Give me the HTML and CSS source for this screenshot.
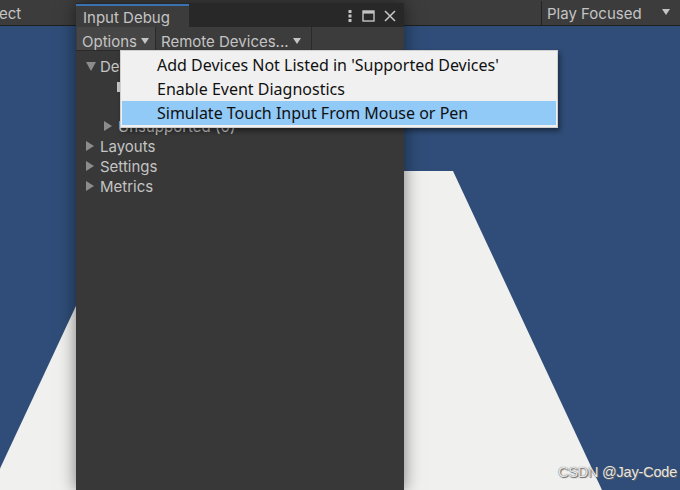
FILE: index.html
```html
<!DOCTYPE html>
<html lang="en">

<head>
    <meta charset="UTF-8">
    <title>Input Debug</title>
    <link rel="stylesheet" href="styles.css">
</head>

<body>
    <div class="topbar">
        <span class="topbar-left">ect</span>
        <span class="topbar-fill"></span>
        <div class="play-focused">
            <span>Play Focused</span>
            <span class="caret"></span>
        </div>
    </div>

    <div class="scene">
        <div class="mesh"></div>
        <div class="watermark">CSDN @Jay-Code</div>
    </div>

    <div class="window">
        <div class="titlebar">
            <div class="tab">Input Debug</div>
            <div class="title-icons">
                <svg width="6" height="14" viewBox="0 0 6 14">
                    <rect x="1.5" y="1" width="3" height="3" fill="#c4c4c4" />
                    <rect x="1.5" y="5.5" width="3" height="3" fill="#c4c4c4" />
                    <rect x="1.5" y="10" width="3" height="3" fill="#c4c4c4" />
                </svg>
                <svg width="13" height="12" viewBox="0 0 13 12">
                    <rect x="1" y="1" width="11" height="10" fill="none" stroke="#c4c4c4" stroke-width="1.4" />
                    <rect x="1" y="1" width="11" height="2.6" fill="#c4c4c4" />
                </svg>
                <svg width="12" height="12" viewBox="0 0 12 12">
                    <path d="M1 1 L11 11 M11 1 L1 11" stroke="#c4c4c4" stroke-width="1.6" />
                </svg>
            </div>
        </div>
        <div class="toolbar">
            <div class="tool-btn options">Options <span class="caret"></span></div>
            <div class="tool-btn remote">Remote Devices... <span class="caret"></span></div>
        </div>
        <div class="tree">
            <div class="row lvl0"><span class="arrow down"></span>Devices</div>
            <div class="row lvl2"><span class="stub"></span></div>
            <div class="row lvl2"></div>
            <div class="row lvl1"><span class="arrow"></span>Unsupported (0)</div>
            <div class="row lvl0"><span class="arrow"></span>Layouts</div>
            <div class="row lvl0"><span class="arrow"></span>Settings</div>
            <div class="row lvl0"><span class="arrow"></span>Metrics</div>
        </div>

        <div class="menu">
            <div class="menu-item">Add Devices Not Listed in 'Supported Devices'</div>
            <div class="menu-item">Enable Event Diagnostics</div>
            <div class="menu-item active">Simulate Touch Input From Mouse or Pen</div>
        </div>
    </div>
</body>

</html>
```

FILE: styles.css
```css
body {
    margin: 0;
    width: 680px;
    height: 490px;
    overflow: hidden;
    position: relative;
    display: flex;
    flex-direction: column;
    font-family: Inter, "Noto Sans", sans-serif;
    background-color: #2f4d78;
}

.topbar {
    height: 24px;
    padding-top: 1px;
    flex: none;
    display: flex;
    align-items: center;
    background-color: #3c3c3c;
    border-bottom: 1px solid #1e1e1e;
    color: #c4c4c4;
    font-size: 15px;
}

.topbar-left {
    margin-left: -1px;
}

.topbar-fill {
    flex: 1;
}

.play-focused {
    width: 123px;
    height: 24px;
    display: flex;
    align-items: center;
    justify-content: space-between;
    padding: 0 10px 0 5px;
    border-left: 1px solid #232323;
}

.caret {
    display: inline-block;
    width: 0;
    height: 0;
    border-left: 4.5px solid transparent;
    border-right: 4.5px solid transparent;
    border-top: 6px solid #c4c4c4;
    vertical-align: middle;
    margin-top: -2px;
}

.scene {
    flex: 1;
    position: relative;
}

.mesh {
    position: absolute;
    inset: 0;
    background-color: #f0f0ef;
    clip-path: polygon(139px 145px, 453px 145px, 602px 464px, -10px 464px);
}

.watermark {
    position: absolute;
    right: 3px;
    bottom: 10px;
    font-family: "Liberation Sans", Arial, sans-serif;
    font-size: 14.5px;
    color: #e6e6e6;
    text-shadow: 0 0 1px #555, 1px 1px 1px #666;
    letter-spacing: -0.2px;
}

.window {
    position: absolute;
    left: 76px;
    top: 3px;
    width: 328px;
    height: 487px;
    background-color: #383838;
    box-shadow: 0 0 16px rgba(0, 0, 0, 0.5);
    display: flex;
    flex-direction: column;
    color: #c4c4c4;
    font-size: 15px;
}

.titlebar {
    height: 24px;
    flex: none;
    display: flex;
    background-color: #282828;
}

.tab {
    width: 113px;
    box-sizing: border-box;
    padding: 3px 0 0 7px;
    background-color: #3c3c3c;
    border-top: 2px solid #3a72b0;
    margin-top: 1px;
    line-height: 18px;
}

.title-icons {
    flex: 1;
    display: flex;
    align-items: center;
    justify-content: flex-end;
    gap: 9px;
    padding: 1px 8px 0 0;
}

.toolbar {
    height: 23px;
    flex: none;
    display: flex;
    background-color: #3c3c3c;
    border-bottom: 1px solid #2a2a2a;
}

.tool-btn {
    display: flex;
    align-items: center;
    gap: 4px;
    padding: 6px 6px 0 5px;
    line-height: 18px;
    border-right: 1px solid #2a2a2a;
}

.options {
    width: 67px;
    background-color: #464646;
    margin-left: 1px;
}

.remote {
    width: 144px;
}

.tree {
    padding-top: 5px;
}

.row {
    height: 20px;
    display: flex;
    align-items: center;
    white-space: nowrap;
}

.lvl0 {
    padding-left: 10px;
}

.lvl1 {
    padding-left: 28px;
}

.lvl2 {
    padding-left: 41px;
}

.stub {
    width: 4px;
    height: 10px;
    margin-top: 2px;
    background-color: #c8c8c8;
}

.arrow {
    width: 0;
    height: 0;
    border-top: 5px solid transparent;
    border-bottom: 5px solid transparent;
    border-left: 8px solid #8c8c8c;
    margin-right: 6px;
}

.arrow.down {
    border-left: 5.5px solid transparent;
    border-right: 5.5px solid transparent;
    border-top: 9px solid #8c8c8c;
    border-bottom: none;
    margin-right: 4px;
}

.menu {
    position: absolute;
    left: 44px;
    top: 47px;
    width: 434px;
    padding: 2px 1px;
    background-color: #f0f0f0;
    border: 1px solid #cfcfcf;
    box-shadow: 2px 3px 5px rgba(0, 0, 0, 0.45);
    font-family: "Noto Sans", sans-serif;
    font-size: 16px;
    color: #101010;
}

.menu-item {
    height: 24px;
    line-height: 24px;
    padding-left: 35px;
}

.menu-item.active {
    background-color: #91c9f7;
}
```
